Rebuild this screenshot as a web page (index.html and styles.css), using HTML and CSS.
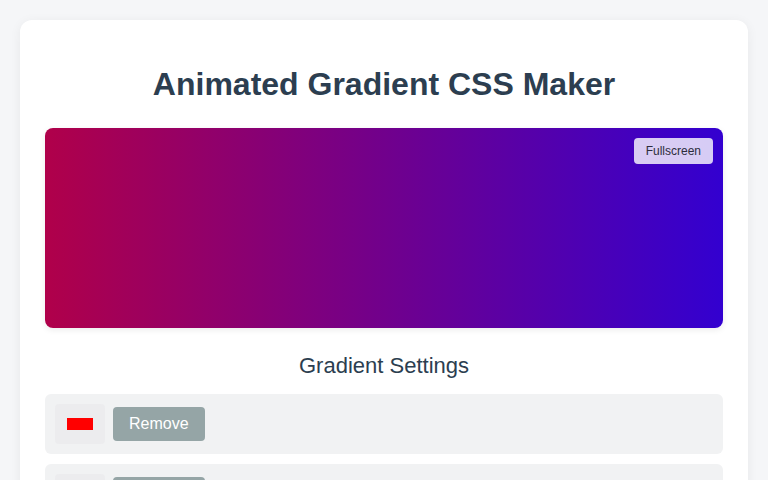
FILE: index.html
```html
<!DOCTYPE html>
<html>
<head>
<meta charset="utf-8">
<link rel="stylesheet" href="styles.css">
</head>
<body>
<div class="card">
  <h1 class="title">Animated Gradient CSS Maker</h1>
  <div class="preview">
    <button class="fullscreen">Fullscreen</button>
  </div>
  <h2 class="section-title">Gradient Settings</h2>
  <div class="stops">
    <div class="stop">
      <div class="color-input"><span class="swatch red"></span></div>
      <button class="remove">Remove</button>
    </div>
    <div class="stop">
      <div class="color-input"><span class="swatch blue"></span></div>
      <button class="remove">Remove</button>
    </div>
  </div>
</div>
</body>
</html>
```
FILE: styles.css
```css
html, body {
  margin: 0;
  padding: 0;
}
body {
  background: #f5f6f8;
  font-family: "Liberation Sans", Arial, sans-serif;
  padding: 20px;
}
.card {
  background: #ffffff;
  border-radius: 12px;
  box-shadow: 0 2px 12px rgba(0, 0, 0, 0.06);
  padding: 25px;
  min-height: 600px;
}
.title {
  margin: 21px 0 25px;
  font-size: 32px;
  line-height: 37px;
  font-weight: bold;
  text-align: center;
  color: #2c3e50;
}
.preview {
  position: relative;
  height: 200px;
  border-radius: 8px;
  background: linear-gradient(90deg, #b0004a 0%, #71008c 50%, #3300d0 100%);
  box-shadow: 0 2px 6px rgba(0, 0, 0, 0.08);
}
.fullscreen {
  position: absolute;
  top: 10px;
  right: 10px;
  height: 26px;
  padding: 0 12px;
  border: none;
  border-radius: 4px;
  background: rgba(255, 255, 255, 0.8);
  color: #2c2c3c;
  font-family: "Liberation Sans", Arial, sans-serif;
  font-size: 12px;
}
.section-title {
  margin: 24px 0 14px;
  font-size: 22px;
  line-height: 28px;
  font-weight: normal;
  text-align: center;
  color: #2c3e50;
}
.stops {
  display: flex;
  flex-direction: column;
  gap: 10px;
}
.stop {
  display: flex;
  align-items: center;
  gap: 8px;
  background: #f1f2f3;
  border-radius: 6px;
  padding: 10px;
}
.color-input {
  width: 50px;
  height: 40px;
  border-radius: 4px;
  background: #ececee;
  display: flex;
  align-items: center;
  justify-content: center;
}
.swatch {
  width: 26px;
  height: 12px;
  display: block;
}
.swatch.red { background: #ff0000; }
.swatch.blue { background: #3300d0; }
.remove {
  height: 34px;
  padding: 0 16px;
  border: none;
  border-radius: 4px;
  background: #95a5a6;
  color: #ffffff;
  font-family: "Liberation Sans", Arial, sans-serif;
  font-size: 16px;
}
```
